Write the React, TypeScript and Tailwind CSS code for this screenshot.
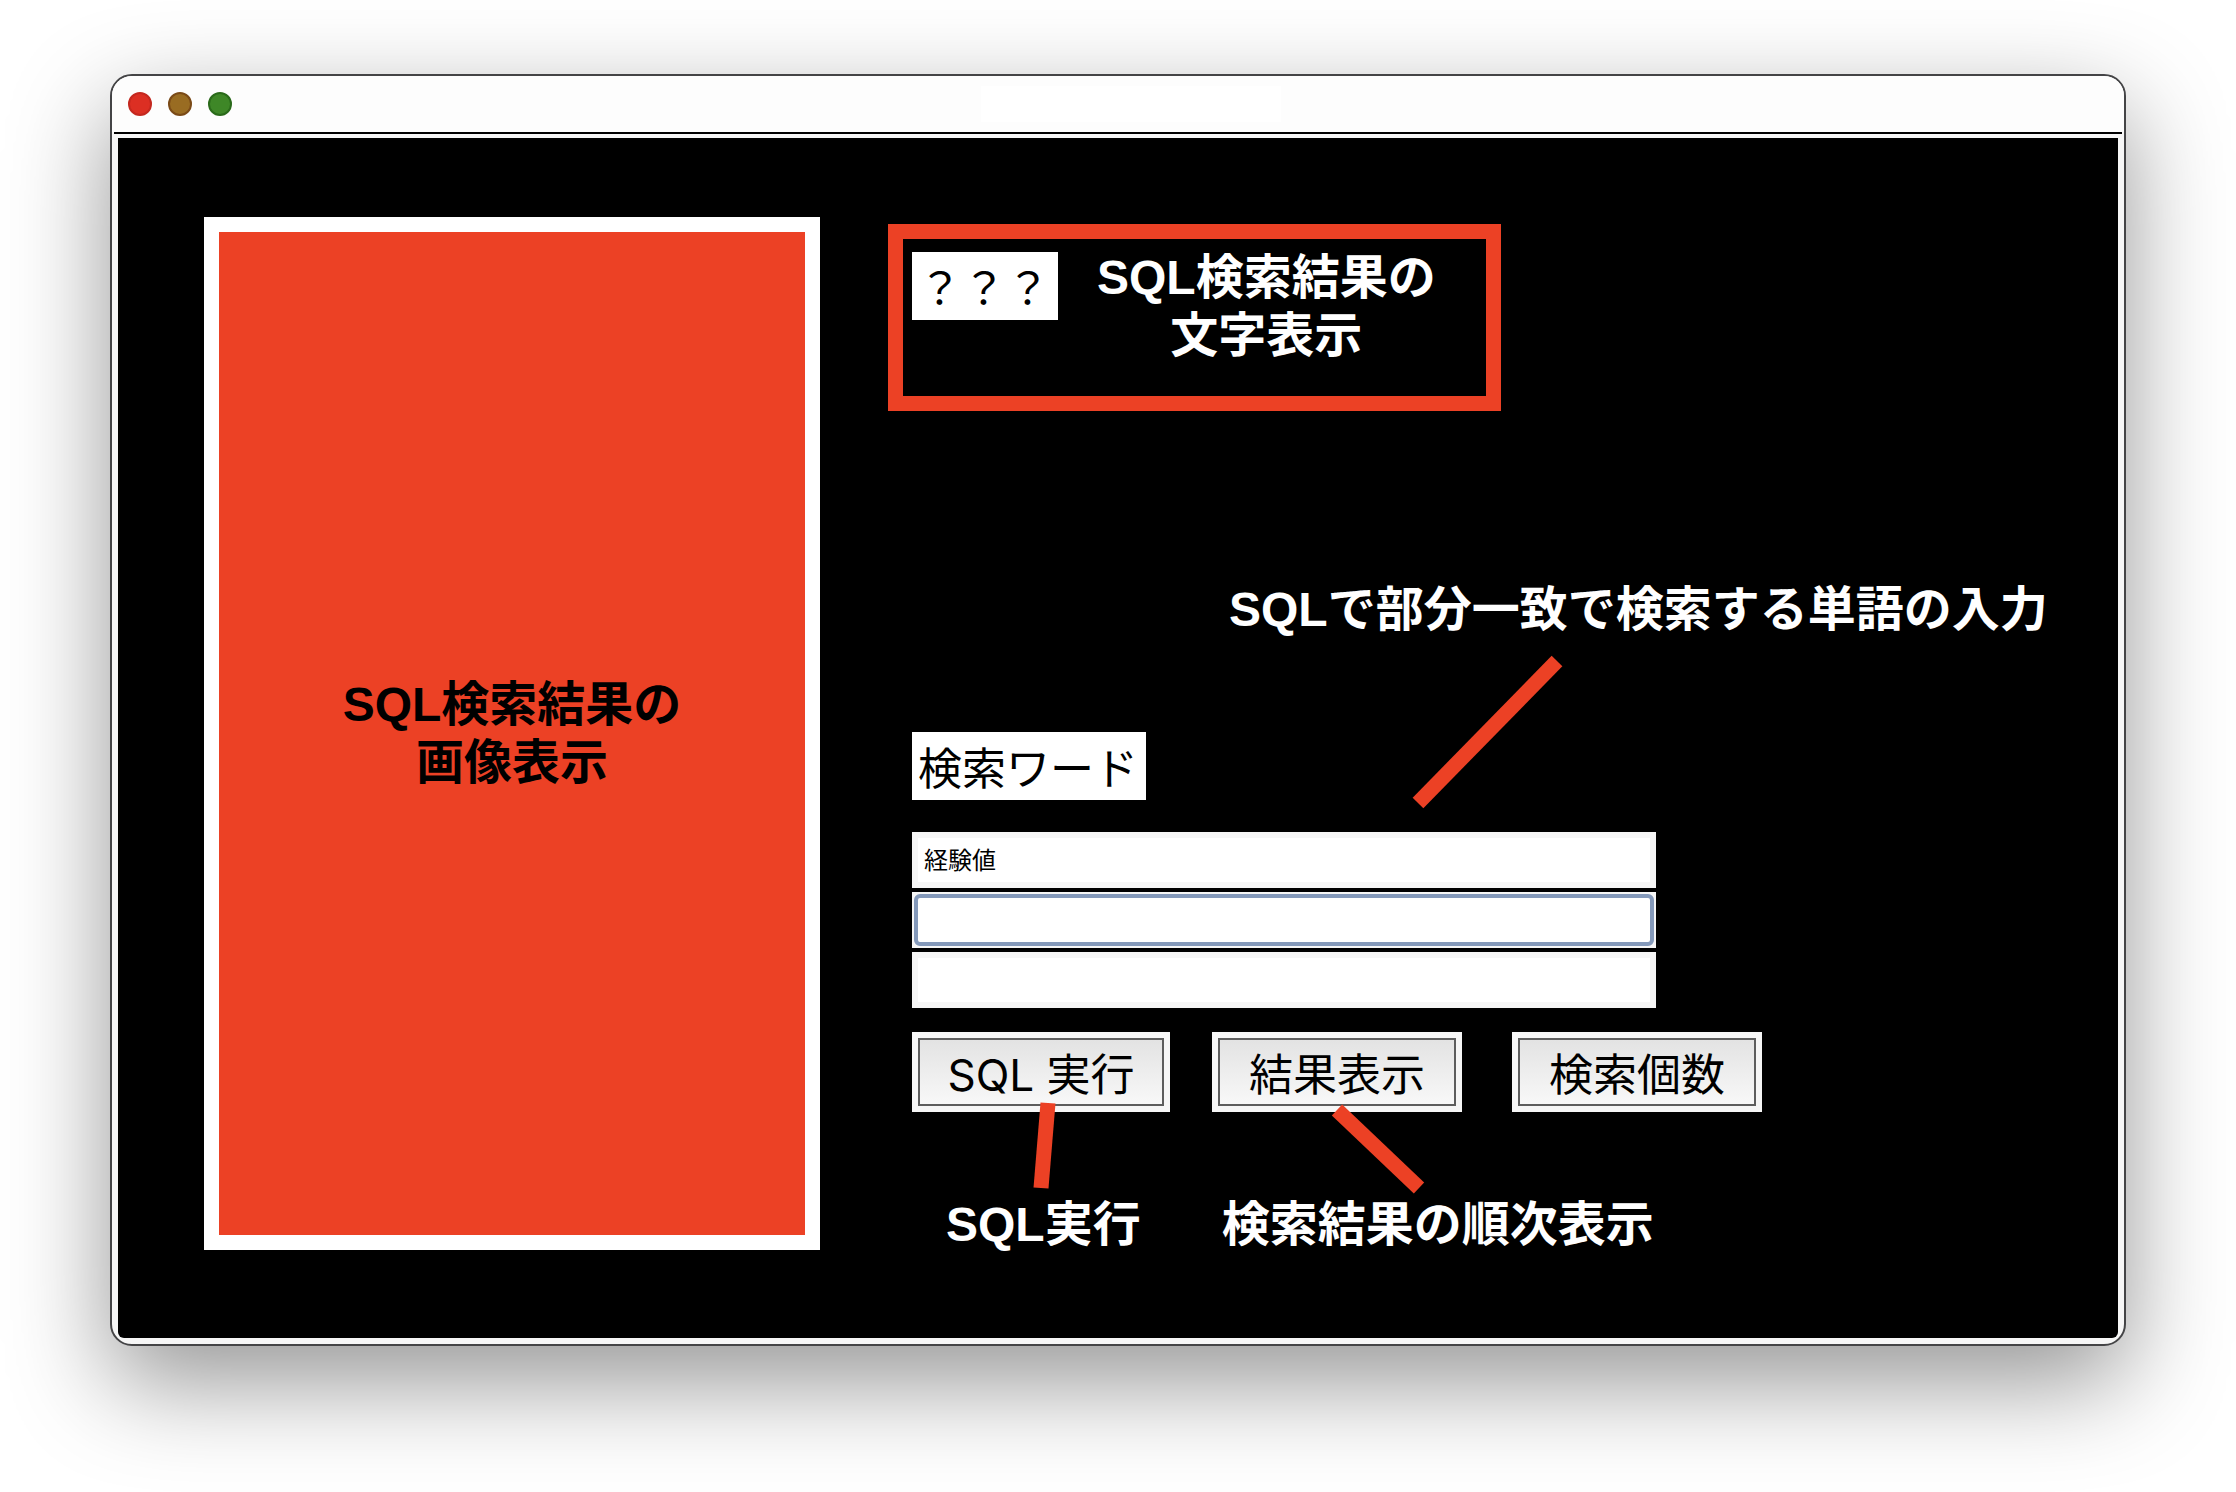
import { useState } from 'react'

const SANS = "font-['Liberation_Sans','Noto_Sans_CJK_JP',sans-serif]"
const RED = '#ec4125'

const tagClass =
  'flex h-[68px] w-fit items-center bg-white px-1.5 pt-2 text-[44px] leading-none text-black'
const noteClass = 'text-[48px] leading-[58px] font-bold whitespace-nowrap'
const inputClass =
  'block h-14 w-full border-[6px] border-[#f6f6f6] bg-white px-1.5 pb-1 text-2xl text-black outline-none'

const BUTTONS = [
  { label: 'SQL 実行', width: 'w-[258px] mr-[42px]' },
  { label: '結果表示', width: 'w-[250px] mr-[50px]' },
  { label: '検索個数', width: 'w-[250px]' },
]

// x1, y1, x2, y2 inside the right column
const POINTERS = [
  [669, 444, 530, 586],
  [160, 886, 153, 971],
  [449, 893, 531, 971],
]

function TitleBar() {
  return (
    <header className="flex h-14 items-center gap-4 rounded-t-[20px] bg-[#fdfdfd] px-4">
      <button
        type="button"
        aria-label="閉じる"
        className="h-6 w-6 rounded-full border-2 border-[#c4281f] bg-[#dc2f23]"
      />
      <button
        type="button"
        aria-label="最小化"
        className="h-6 w-6 rounded-full border-2 border-[#7a4a17] bg-[#996c22]"
      />
      <button
        type="button"
        aria-label="拡大"
        className="h-6 w-6 rounded-full border-2 border-[#2a6a1a] bg-[#3e8727]"
      />
      <div className="ml-[733px] h-9 w-[300px] bg-white" />
    </header>
  )
}

function Pointers() {
  return (
    <svg
      className="pointer-events-none absolute top-0 left-0 overflow-visible"
      width="700"
      height="1000"
      aria-hidden="true"
    >
      {POINTERS.map(([x1, y1, x2, y2]) => (
        <line key={x1} x1={x1} y1={y1} x2={x2} y2={y2} stroke={RED} strokeWidth="15" />
      ))}
    </svg>
  )
}

function SearchForm() {
  const [words, setWords] = useState(['経験値', '', ''])

  const setWord = (index: number, value: string) =>
    setWords((w) => w.map((word, i) => (i === index ? value : word)))

  return (
    <form className="mt-[93px] ml-6" onSubmit={(e) => e.preventDefault()}>
      <label htmlFor="word-0" className={`${tagClass} min-w-[234px]`}>
        検索ワード
      </label>

      <div className="mt-8 flex w-[744px] flex-col gap-1">
        {words.map((word, i) =>
          i === 1 ? (
            <div key={i} className="bg-[#f6f6f6] p-0.5">
              <input
                aria-label="検索ワード 2"
                className="block h-[52px] w-full rounded-md border-4 border-[#8499ba] bg-white px-1.5 pb-1 text-2xl text-black outline-none"
                value={word}
                onChange={(e) => setWord(i, e.target.value)}
              />
            </div>
          ) : (
            <input
              key={i}
              id={`word-${i}`}
              aria-label={`検索ワード ${i + 1}`}
              className={inputClass}
              value={word}
              onChange={(e) => setWord(i, e.target.value)}
            />
          ),
        )}
      </div>

      <div className="mt-6 flex">
        {BUTTONS.map((b) => (
          <div key={b.label} className={`${b.width} bg-[#f6f6f6] p-1.5`}>
            <button
              type="button"
              className="h-[68px] w-full border-2 border-[#5d5d5d] bg-linear-to-b from-[#e3e3e3] to-[#f8f8f8] pt-1.5 font-['Inter','Noto_Sans_CJK_JP',sans-serif] text-[44px] leading-none whitespace-nowrap text-black"
            >
              {b.label}
            </button>
          </div>
        ))}
      </div>
    </form>
  )
}

export default function App() {
  return (
    <div className={`${SANS} min-h-screen overflow-hidden bg-white px-[110px] pt-[74px] pb-[146px]`}>
      <div className="rounded-[22px] border-2 border-[#444446] bg-[#f6f6f6] shadow-[0_36px_100px_rgba(0,0,0,0.42)]">
        <TitleBar />
        <div className="mx-0.5 h-0.5 bg-black" />

        <main className="mx-1.5 mt-1 mb-1.5 flex gap-[68px] rounded-b-md bg-black pt-[79px] pb-[84px] pl-[86px]">
          {/* Left - picture of the hit */}
          <section className="flex h-[1033px] w-[616px] shrink-0 items-center justify-center border-[15px] border-white bg-[#ec4125]">
            <p className={`${noteClass} text-center text-black`}>
              SQL検索結果の
              <br />
              画像表示
            </p>
          </section>

          {/* Right - text of the hit and the search form */}
          <section className="relative flex-1 pt-[7px] text-white">
            <div className="flex h-[187px] w-[613px] gap-[39px] border-[15px] border-[#ec4125] pt-2.5 pl-[9px]">
              <output className={`${tagClass} mt-[3px] min-w-[146px]`}>？？？</output>
              <p className={`${noteClass} text-center`}>
                SQL検索結果の
                <br />
                文字表示
              </p>
            </div>

            <p className={`${noteClass} mt-[170px] ml-[341px]`}>SQLで部分一致で検索する単語の入力</p>

            <SearchForm />

            <div className="mt-[84px] ml-[58px] flex gap-[81px]">
              <p className={noteClass}>SQL実行</p>
              <p className={noteClass}>検索結果の順次表示</p>
            </div>

            <Pointers />
          </section>
        </main>
      </div>
    </div>
  )
}
